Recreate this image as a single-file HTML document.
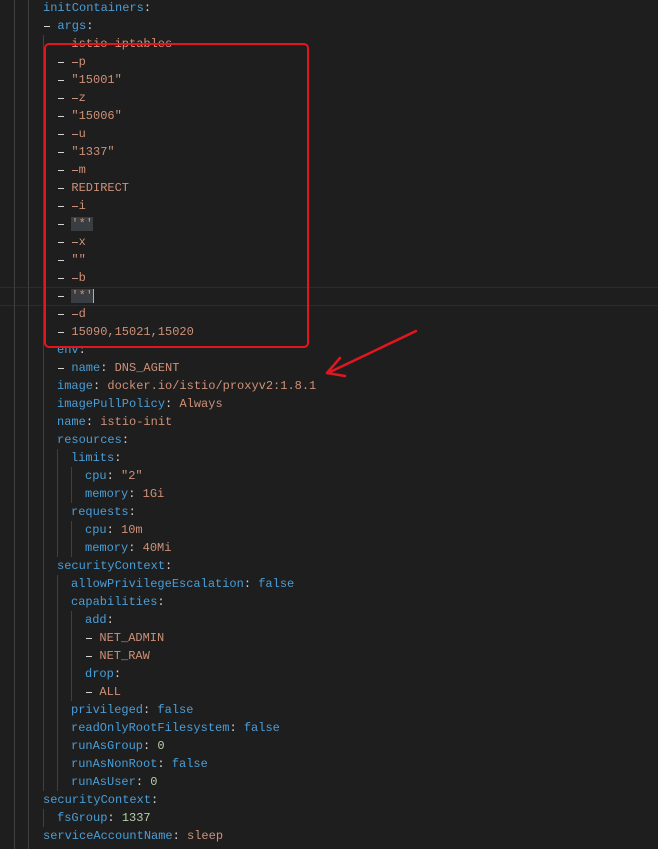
<!DOCTYPE html>
<html><head><meta charset="utf-8"><style>
html,body{margin:0;padding:0;background:#1e1e1e;width:658px;height:849px;overflow:hidden;position:relative;font-family:"Liberation Mono",monospace;font-size:12px}
.l{position:absolute;left:0;height:18px;line-height:18px;white-space:pre;color:#d4d4d4}
.k{color:#4a9ed8}.s{color:#ce9178}.n{color:#b5cea8}.b{color:#4a9ed8}
.g{position:absolute;width:1px;background:#404040}
.sel{background:#3a3d41}
i{display:inline-block;width:7.2px;height:18px;vertical-align:top;position:relative;font-style:normal}
i::before{content:"";position:absolute;left:0.5px;width:6.5px;top:9px;height:1.3px;background:currentColor}
</style></head><body>
<div style="position:absolute;left:0;top:287px;width:658px;height:17px;border-top:1px solid #2c2c2c;border-bottom:1px solid #2c2c2c"></div>
<div class="g" style="left:14px;top:0;height:849px"></div>
<div class="g" style="left:28px;top:0;height:849px"></div>
<div class="g" style="left:43px;top:35px;height:756px"></div>
<div class="g" style="left:57px;top:449px;height:108px"></div>
<div class="g" style="left:71px;top:467px;height:36px"></div>
<div class="g" style="left:71px;top:521px;height:36px"></div>
<div class="g" style="left:57px;top:575px;height:216px"></div>
<div class="g" style="left:71px;top:611px;height:90px"></div>
<div class="g" style="left:43px;top:809px;height:18px"></div>
<div class="l" style="top:-1px;left:43px"><span class="k">initContainers</span>:</div>
<div class="l" style="top:17px;left:43px"><i></i> <span class="k">args</span>:</div>
<div class="l" style="top:35px;left:57px"><i></i> <span class="s">istio-iptables</span></div>
<div class="l" style="top:53px;left:57px"><i></i> <span class="s"><i></i>p</span></div>
<div class="l" style="top:71px;left:57px"><i></i> <span class="s">"15001"</span></div>
<div class="l" style="top:89px;left:57px"><i></i> <span class="s"><i></i>z</span></div>
<div class="l" style="top:107px;left:57px"><i></i> <span class="s">"15006"</span></div>
<div class="l" style="top:125px;left:57px"><i></i> <span class="s"><i></i>u</span></div>
<div class="l" style="top:143px;left:57px"><i></i> <span class="s">"1337"</span></div>
<div class="l" style="top:161px;left:57px"><i></i> <span class="s"><i></i>m</span></div>
<div class="l" style="top:179px;left:57px"><i></i> <span class="s">REDIRECT</span></div>
<div class="l" style="top:197px;left:57px"><i></i> <span class="s"><i></i>i</span></div>
<div class="l" style="top:215px;left:57px"><i></i> <span class="s sel">'*'</span></div>
<div class="l" style="top:233px;left:57px"><i></i> <span class="s"><i></i>x</span></div>
<div class="l" style="top:251px;left:57px"><i></i> <span class="s">""</span></div>
<div class="l" style="top:269px;left:57px"><i></i> <span class="s"><i></i>b</span></div>
<div class="l" style="top:287px;left:57px"><i></i> <span class="s sel">'*'</span><span style="border-left:1px solid #aeafad"></span></div>
<div class="l" style="top:305px;left:57px"><i></i> <span class="s"><i></i>d</span></div>
<div class="l" style="top:323px;left:57px"><i></i> <span class="s">15090,15021,15020</span></div>
<div class="l" style="top:341px;left:57px"><span class="k">env</span>:</div>
<div class="l" style="top:359px;left:57px"><i></i> <span class="k">name</span>: <span class="s">DNS_AGENT</span></div>
<div class="l" style="top:377px;left:57px"><span class="k">image</span>: <span class="s">docker.io/istio/proxyv2:1.8.1</span></div>
<div class="l" style="top:395px;left:57px"><span class="k">imagePullPolicy</span>: <span class="s">Always</span></div>
<div class="l" style="top:413px;left:57px"><span class="k">name</span>: <span class="s">istio-init</span></div>
<div class="l" style="top:431px;left:57px"><span class="k">resources</span>:</div>
<div class="l" style="top:449px;left:71px"><span class="k">limits</span>:</div>
<div class="l" style="top:467px;left:85px"><span class="k">cpu</span>: <span class="s">"2"</span></div>
<div class="l" style="top:485px;left:85px"><span class="k">memory</span>: <span class="s">1Gi</span></div>
<div class="l" style="top:503px;left:71px"><span class="k">requests</span>:</div>
<div class="l" style="top:521px;left:85px"><span class="k">cpu</span>: <span class="s">10m</span></div>
<div class="l" style="top:539px;left:85px"><span class="k">memory</span>: <span class="s">40Mi</span></div>
<div class="l" style="top:557px;left:57px"><span class="k">securityContext</span>:</div>
<div class="l" style="top:575px;left:71px"><span class="k">allowPrivilegeEscalation</span>: <span class="b">false</span></div>
<div class="l" style="top:593px;left:71px"><span class="k">capabilities</span>:</div>
<div class="l" style="top:611px;left:85px"><span class="k">add</span>:</div>
<div class="l" style="top:629px;left:85px"><i></i> <span class="s">NET_ADMIN</span></div>
<div class="l" style="top:647px;left:85px"><i></i> <span class="s">NET_RAW</span></div>
<div class="l" style="top:665px;left:85px"><span class="k">drop</span>:</div>
<div class="l" style="top:683px;left:85px"><i></i> <span class="s">ALL</span></div>
<div class="l" style="top:701px;left:71px"><span class="k">privileged</span>: <span class="b">false</span></div>
<div class="l" style="top:719px;left:71px"><span class="k">readOnlyRootFilesystem</span>: <span class="b">false</span></div>
<div class="l" style="top:737px;left:71px"><span class="k">runAsGroup</span>: <span class="n">0</span></div>
<div class="l" style="top:755px;left:71px"><span class="k">runAsNonRoot</span>: <span class="b">false</span></div>
<div class="l" style="top:773px;left:71px"><span class="k">runAsUser</span>: <span class="n">0</span></div>
<div class="l" style="top:791px;left:43px"><span class="k">securityContext</span>:</div>
<div class="l" style="top:809px;left:57px"><span class="k">fsGroup</span>: <span class="n">1337</span></div>
<div class="l" style="top:827px;left:43px"><span class="k">serviceAccountName</span>: <span class="s">sleep</span></div>
<div style="position:absolute;left:44px;top:43px;width:261px;height:301px;border:2.5px solid #e3151f;border-radius:5px"></div>
<svg style="position:absolute;left:0;top:0" width="658" height="849">
<line x1="416" y1="331" x2="330" y2="372" stroke="#e3151f" stroke-width="2.5" stroke-linecap="round"/>
<path d="M327 373 L340 358 M327 373 L345 376" stroke="#e3151f" stroke-width="2.5" fill="none" stroke-linecap="round"/>
</svg>
</body></html>
